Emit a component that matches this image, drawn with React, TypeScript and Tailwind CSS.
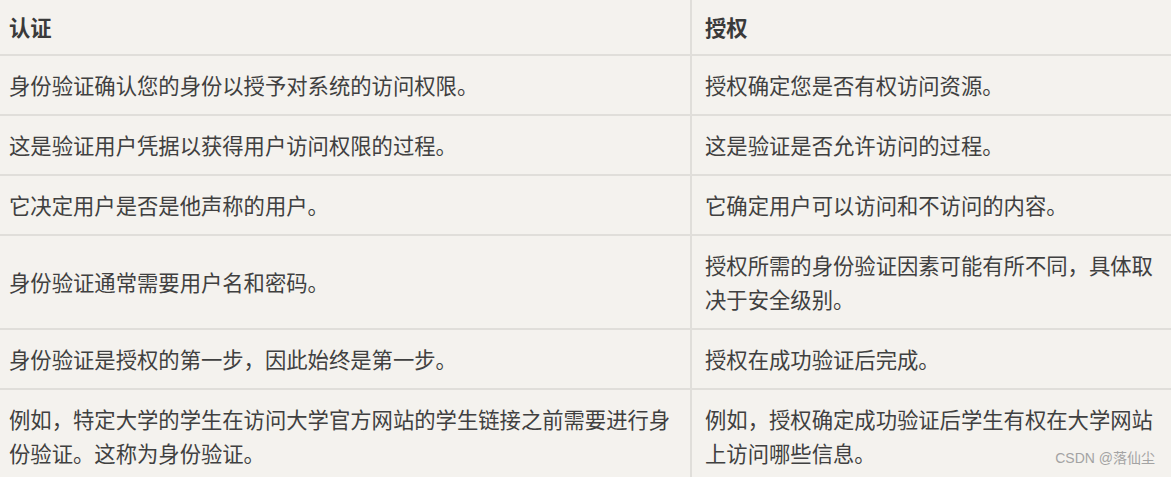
import React from 'react';

const rows: [string, string][] = [
  ['身份验证确认您的身份以授予对系统的访问权限。', '授权确定您是否有权访问资源。'],
  ['这是验证用户凭据以获得用户访问权限的过程。', '这是验证是否允许访问的过程。'],
  ['它决定用户是否是他声称的用户。', '它确定用户可以访问和不访问的内容。'],
  ['身份验证通常需要用户名和密码。', '授权所需的身份验证因素可能有所不同，具体取决于安全级别。'],
  ['身份验证是授权的第一步，因此始终是第一步。', '授权在成功验证后完成。'],
  [
    '例如，特定大学的学生在访问大学官方网站的学生链接之前需要进行身份验证。这称为身份验证。',
    '例如，授权确定成功验证后学生有权在大学网站上访问哪些信息。',
  ],
];

const App: React.FC = () => {
  return (
    <div
      className="relative w-[1171px] h-[477px] overflow-hidden bg-[#f4f2ee] text-[#404040]"
      style={{ fontFamily: '"Noto Sans CJK SC", "Noto Sans", sans-serif' }}
    >
      <div className="grid grid-cols-[692px_1fr] text-[21.33px] leading-[34px]">
        <div className="pl-[9px] pr-3 pt-[10px] pb-[10px] font-bold text-[#3a3a3a] border-b-2 border-r-2 border-[#e0deda]">
          认证
        </div>
        <div className="pl-[13px] pr-3 pt-[10px] pb-[10px] font-bold text-[#3a3a3a] border-b-2 border-[#e0deda]">
          授权
        </div>
        {rows.map(([a, b], i) => (
          <React.Fragment key={i}>
            <div className="pl-[9px] pr-[14px] py-3 border-b-2 border-r-2 border-[#e0deda] flex items-center">
              {a}
            </div>
            <div className="pl-[13px] pr-[14px] py-3 border-b-2 border-[#e0deda] flex items-center">
              {b}
            </div>
          </React.Fragment>
        ))}
      </div>
      <div
        className="absolute right-[16px] bottom-[10px] text-[14px] leading-[18px] text-[#a3a3a3]"
        style={{ fontFamily: '"Liberation Sans", "Noto Sans CJK SC", sans-serif' }}
      >
        CSDN @落仙尘
      </div>
    </div>
  );
};

export default App;
